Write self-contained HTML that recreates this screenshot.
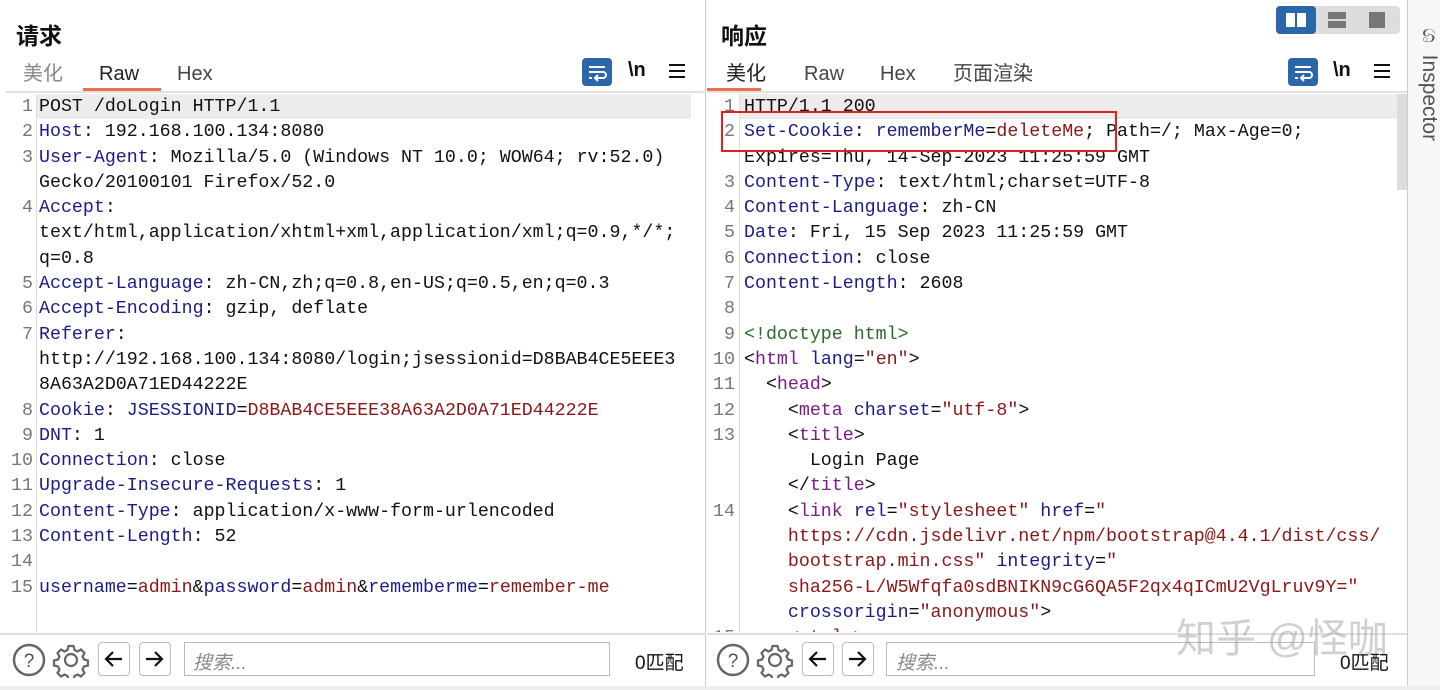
<!DOCTYPE html>
<html><head><meta charset="utf-8">
<style>
*{margin:0;padding:0;box-sizing:border-box}
body{width:1440px;height:690px;background:#fff;position:relative;overflow:hidden;font-family:"Liberation Sans","Noto Sans CJK SC",sans-serif;color:#222}
.abs{position:absolute}
.h{font-weight:bold;font-size:23px;color:#111;line-height:28px}
.tab{font-size:20px;color:#444;top:61px;line-height:26px}
.code{font-family:"Liberation Mono","Noto Sans CJK SC",monospace;font-size:18.3px;line-height:25.3px;white-space:pre;color:#111}
.ln{font-family:"Liberation Mono",monospace;font-size:18.3px;line-height:25.3px;white-space:pre;color:#777;text-align:right;overflow:hidden}
.k{color:#1c1c86}.v{color:#8a1818}.t{color:#7a1b86}.g{color:#2c6a2c}
.btn{border:1px solid #bbb;border-radius:4px;background:#fff}
</style></head><body>
<div class="abs" style="left:0;top:0;width:706px;height:690px;border-right:1px solid #ccc"></div>
<div class="abs" style="left:1407px;top:0;width:1px;height:690px;background:#ccc"></div>
<div class="abs" style="left:1408px;top:0;width:32px;height:690px;background:#f7f7f7"></div>
<div class="abs" style="left:1418px;top:28px;font-size:21px;color:#555;writing-mode:vertical-rl;white-space:nowrap;line-height:22px">ශ&nbsp;&nbsp;Inspector</div>

<div class="abs h" style="left:16px;top:22px">请求</div>
<div class="abs tab" style="left:23px;color:#888">美化</div>
<div class="abs tab" style="left:99px;color:#222">Raw</div>
<div class="abs tab" style="left:177px">Hex</div>
<div class="abs" style="left:83px;top:88px;width:78px;height:3px;background:#e8704a"></div>
<div class="abs" style="left:6px;top:91px;width:700px;height:2px;background:#e2e2e2"></div>

<div class="abs" style="left:36px;top:94px;width:1px;height:540px;background:#ddd"></div>
<div class="abs" style="left:37px;top:94px;width:654px;height:25px;background:#ececec"></div>
<div class="abs ln" style="left:0;top:95px;width:33px;height:538px">1
2
3

4


5
6
7


8
9
10
11
12
13
14
15</div>
<div class="abs code" style="left:39px;top:95px">POST /doLogin HTTP/1.1
<span class="k">Host</span>: 192.168.100.134:8080
<span class="k">User-Agent</span>: Mozilla/5.0 (Windows NT 10.0; WOW64; rv:52.0)
Gecko/20100101 Firefox/52.0
<span class="k">Accept</span>:
text/html,application/xhtml+xml,application/xml;q=0.9,*/*;
q=0.8
<span class="k">Accept-Language</span>: zh-CN,zh;q=0.8,en-US;q=0.5,en;q=0.3
<span class="k">Accept-Encoding</span>: gzip, deflate
<span class="k">Referer</span>:
http://192.168.100.134:8080/login;jsessionid=D8BAB4CE5EEE3
8A63A2D0A71ED44222E
<span class="k">Cookie</span>: <span class="k">JSESSIONID</span>=<span class="v">D8BAB4CE5EEE38A63A2D0A71ED44222E</span>
<span class="k">DNT</span>: 1
<span class="k">Connection</span>: close
<span class="k">Upgrade-Insecure-Requests</span>: 1
<span class="k">Content-Type</span>: application/x-www-form-urlencoded
<span class="k">Content-Length</span>: 52

<span class="k">username</span>=<span class="v">admin</span>&amp;<span class="k">password</span>=<span class="v">admin</span>&amp;<span class="k">rememberme</span>=<span class="v">remember-me</span></div>

<div class="abs h" style="left:721px;top:22px">响应</div>
<div class="abs tab" style="left:726px;color:#222">美化</div>
<div class="abs tab" style="left:804px">Raw</div>
<div class="abs tab" style="left:880px">Hex</div>
<div class="abs tab" style="left:953px">页面渲染</div>
<div class="abs" style="left:707px;top:88px;width:54px;height:3px;background:#e8704a"></div>
<div class="abs" style="left:707px;top:91px;width:700px;height:2px;background:#e2e2e2"></div>
<div class="abs" style="left:739px;top:94px;width:1px;height:538px;background:#ddd"></div>
<div class="abs" style="left:740px;top:94px;width:657px;height:25px;background:#ececec"></div>
<div class="abs" style="left:1397px;top:94px;width:10px;height:96px;background:#dcdcdc"></div>
<div class="abs ln" style="left:700px;top:95px;width:35px;height:537px">1
2

3
4
5
6
7
8
9
10
11
12
13


14




15</div>
<div class="abs code" style="left:744px;top:95px;height:537px;overflow:hidden">HTTP/1.1 200
<span class="k">Set-Cookie</span>: <span class="k">rememberMe</span>=<span class="v">deleteMe</span>; Path=/; Max-Age=0;
Expires=Thu, 14-Sep-2023 11:25:59 GMT
<span class="k">Content-Type</span>: text/html;charset=UTF-8
<span class="k">Content-Language</span>: zh-CN
<span class="k">Date</span>: Fri, 15 Sep 2023 11:25:59 GMT
<span class="k">Connection</span>: close
<span class="k">Content-Length</span>: 2608

<span class="g">&lt;!doctype html&gt;</span>
&lt;<span class="t">html</span> <span class="k">lang</span>=<span class="v">"en"</span>&gt;
  &lt;<span class="t">head</span>&gt;
    &lt;<span class="t">meta</span> <span class="k">charset</span>=<span class="v">"utf-8"</span>&gt;
    &lt;<span class="t">title</span>&gt;
      Login Page
    &lt;/<span class="t">title</span>&gt;
    &lt;<span class="t">link</span> <span class="k">rel</span>=<span class="v">"stylesheet"</span> <span class="k">href</span>=<span class="v">"</span>
<span class="v">    https://cdn.jsdelivr.net/npm/bootstrap@4.4.1/dist/css/</span>
<span class="v">    bootstrap.min.css"</span> <span class="k">integrity</span>=<span class="v">"</span>
<span class="v">    sha256-L/W5Wfqfa0sdBNIKN9cG6QA5F2qx4qICmU2VgLruv9Y="</span>
    <span class="k">crossorigin</span>=<span class="v">"anonymous"</span>&gt;
    &lt;<span class="t">style</span>&gt;</div>
<div class="abs" style="left:721px;top:111px;width:396px;height:41px;border:2px solid #e02020"></div>

<div class="abs" style="left:1276px;top:6px;width:124px;height:28px;background:#ddd;border-radius:4px"></div>
<div class="abs" style="left:1276px;top:6px;width:40px;height:28px;background:#2a66a8;border-radius:4px"></div>
<div class="abs" style="left:1286px;top:13px;width:9px;height:14px;background:#fff"></div>
<div class="abs" style="left:1297px;top:13px;width:9px;height:14px;background:#fff"></div>
<div class="abs" style="left:1328px;top:12px;width:18px;height:7px;background:#777"></div>
<div class="abs" style="left:1328px;top:21px;width:18px;height:7px;background:#777"></div>
<div class="abs" style="left:1369px;top:12px;width:16px;height:16px;background:#777"></div>

<svg class="abs" style="left:582px;top:58px" width="30" height="28"><rect width="30" height="28" rx="4" fill="#2a66a8"/><path d="M7 9h16M7 14h14a3 3 0 0 1 0 6h-7M7 20h3M16 17l-3 3 3 3" stroke="#fff" stroke-width="2" fill="none"/></svg>
<div class="abs" style="left:628px;top:59px;font-size:20px;font-weight:bold;color:#111">\n</div>
<svg class="abs" style="left:668px;top:62px" width="18" height="18"><path d="M1 3h16M1 9h16M1 15h16" stroke="#111" stroke-width="2"/></svg>
<svg class="abs" style="left:1288px;top:58px" width="30" height="28"><rect width="30" height="28" rx="4" fill="#2a66a8"/><path d="M7 9h16M7 14h14a3 3 0 0 1 0 6h-7M7 20h3M16 17l-3 3 3 3" stroke="#fff" stroke-width="2" fill="none"/></svg>
<div class="abs" style="left:1333px;top:59px;font-size:20px;font-weight:bold;color:#111">\n</div>
<svg class="abs" style="left:1373px;top:62px" width="18" height="18"><path d="M1 3h16M1 9h16M1 15h16" stroke="#111" stroke-width="2"/></svg>

<div class="abs" style="left:0;top:633px;width:706px;height:2px;background:#e0e0e0"></div>
<div class="abs" style="left:707px;top:633px;width:700px;height:2px;background:#e0e0e0"></div>
<div class="abs" style="left:0;top:686px;width:1440px;height:4px;background:#eee"></div>

<svg class="abs" style="left:12px;top:642px" width="80" height="36"><circle cx="17" cy="18" r="15" stroke="#666" stroke-width="2.5" fill="none"/><text x="17" y="25" font-size="19" text-anchor="middle" fill="#555" font-family="Liberation Sans">?</text><g transform="translate(59,18)" stroke="#666" stroke-width="2.2" fill="none"><circle r="6"/><path d="M-2.5-14h5l1 4 3 1.5 3.5-2 3.5 3.5-2 3.5 1.5 3 4 1v5l-4 1-1.5 3 2 3.5-3.5 3.5-3.5-2-3 1.5-1 4h-5l-1-4-3-1.5-3.5 2-3.5-3.5 2-3.5-1.5-3-4-1v-5l4-1 1.5-3-2-3.5 3.5-3.5 3.5 2 3-1.5z"/></g></svg>
<div class="abs btn" style="left:98px;top:642px;width:32px;height:34px"></div>
<div class="abs btn" style="left:139px;top:642px;width:32px;height:34px"></div>
<svg class="abs" style="left:98px;top:642px" width="74" height="34"><path d="M24 17H8M15 10l-7 7 7 7" stroke="#111" stroke-width="2.2" fill="none"/><path d="M48 17h16M57 10l7 7-7 7" stroke="#111" stroke-width="2.2" fill="none"/></svg>
<div class="abs" style="left:184px;top:642px;width:426px;height:34px;border:1px solid #bbb"></div>
<div class="abs" style="left:193px;top:648px;font-size:19px;color:#888;font-style:italic">搜索...</div>
<div class="abs" style="left:635px;top:648px;font-size:19px;color:#111">0匹配</div>

<svg class="abs" style="left:716px;top:642px" width="80" height="36"><circle cx="17" cy="18" r="15" stroke="#666" stroke-width="2.5" fill="none"/><text x="17" y="25" font-size="19" text-anchor="middle" fill="#555" font-family="Liberation Sans">?</text><g transform="translate(59,18)" stroke="#666" stroke-width="2.2" fill="none"><circle r="6"/><path d="M-2.5-14h5l1 4 3 1.5 3.5-2 3.5 3.5-2 3.5 1.5 3 4 1v5l-4 1-1.5 3 2 3.5-3.5 3.5-3.5-2-3 1.5-1 4h-5l-1-4-3-1.5-3.5 2-3.5-3.5 2-3.5-1.5-3-4-1v-5l4-1 1.5-3-2-3.5 3.5-3.5 3.5 2 3-1.5z"/></g></svg>
<div class="abs btn" style="left:802px;top:642px;width:32px;height:34px"></div>
<div class="abs btn" style="left:842px;top:642px;width:32px;height:34px"></div>
<svg class="abs" style="left:802px;top:642px" width="74" height="34"><path d="M24 17H8M15 10l-7 7 7 7" stroke="#111" stroke-width="2.2" fill="none"/><path d="M47 17h16M56 10l7 7-7 7" stroke="#111" stroke-width="2.2" fill="none"/></svg>
<div class="abs" style="left:886px;top:642px;width:429px;height:34px;border:1px solid #bbb"></div>
<div class="abs" style="left:896px;top:648px;font-size:19px;color:#888;font-style:italic">搜索...</div>
<div class="abs" style="left:1340px;top:648px;font-size:19px;color:#111">0匹配</div>
<div class="abs" style="left:1176px;top:606px;font-size:40px;color:rgba(150,150,150,0.45);white-space:nowrap">知乎 @怪咖</div>
</body></html>
